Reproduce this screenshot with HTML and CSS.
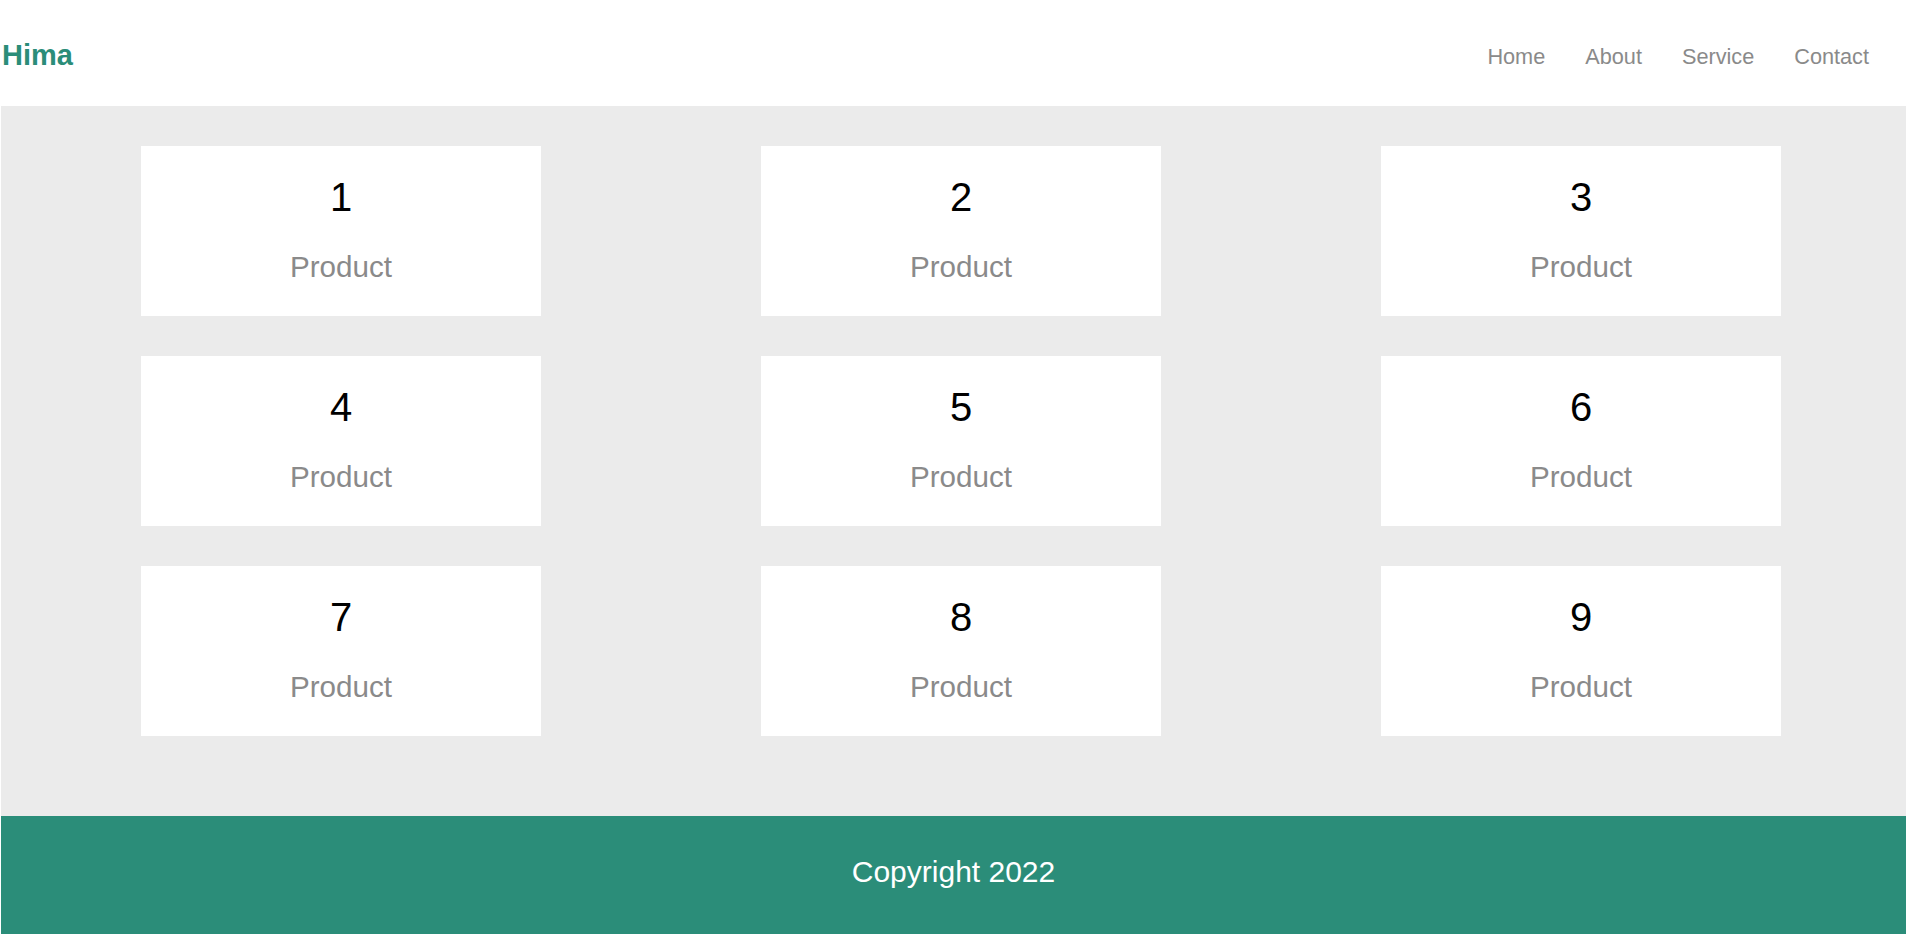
FILE: index.html
```html
<!DOCTYPE html>
<html lang="en">
<head>
<meta charset="utf-8">
<title>Hima</title>
<link rel="stylesheet" href="styles.css">
</head>
<body>
<header class="site-header">
  <div class="logo">Hima</div>
  <nav class="nav">
    <a href="#">Home</a>
    <a href="#">About</a>
    <a href="#">Service</a>
    <a href="#">Contact</a>
  </nav>
</header>
<main class="products">
  <div class="card"><div class="num">1</div><div class="label">Product</div></div>
  <div class="card"><div class="num">2</div><div class="label">Product</div></div>
  <div class="card"><div class="num">3</div><div class="label">Product</div></div>
  <div class="card"><div class="num">4</div><div class="label">Product</div></div>
  <div class="card"><div class="num">5</div><div class="label">Product</div></div>
  <div class="card"><div class="num">6</div><div class="label">Product</div></div>
  <div class="card"><div class="num">7</div><div class="label">Product</div></div>
  <div class="card"><div class="num">8</div><div class="label">Product</div></div>
  <div class="card"><div class="num">9</div><div class="label">Product</div></div>
</main>
<footer class="site-footer">Copyright 2022</footer>
</body>
</html>
```
FILE: styles.css
```css
* { box-sizing: border-box; }
html, body { margin: 0; padding: 0; }
body {
  font-family: "Liberation Sans", Arial, sans-serif;
  background: #ffffff;
  overflow: hidden;
}
.site-header {
  height: 106px;
  display: flex;
  align-items: flex-start;
  justify-content: space-between;
  padding: 39px 37px 0 2px;
}
.logo {
  font-size: 29px;
  font-weight: bold;
  color: #2b8d79;
}
.nav {
  display: flex;
  gap: 40px;
  margin-top: 5px;
}
.nav a {
  font-size: 21.7px;
  color: #8a8a8a;
  text-decoration: none;
}
.products {
  margin-left: 1px;
  background: #ebebeb;
  height: 710px;
  padding: 40px 0 0 140px;
  display: grid;
  grid-template-columns: repeat(3, 400px);
  grid-auto-rows: 170px;
  column-gap: 220px;
  row-gap: 40px;
  align-content: start;
}
.card {
  background: #ffffff;
  display: flex;
  flex-direction: column;
  align-items: center;
  padding-top: 29px;
}
.num {
  font-size: 40px;
  color: #000000;
  margin-bottom: 30px;
}
.label {
  font-size: 29.6px;
  color: #8a8a8a;
}
.site-footer {
  margin-left: 1px;
  height: 118px;
  background: #2b8d79;
  color: #ffffff;
  font-size: 30px;
  text-align: center;
  padding-top: 39px;
}
```
